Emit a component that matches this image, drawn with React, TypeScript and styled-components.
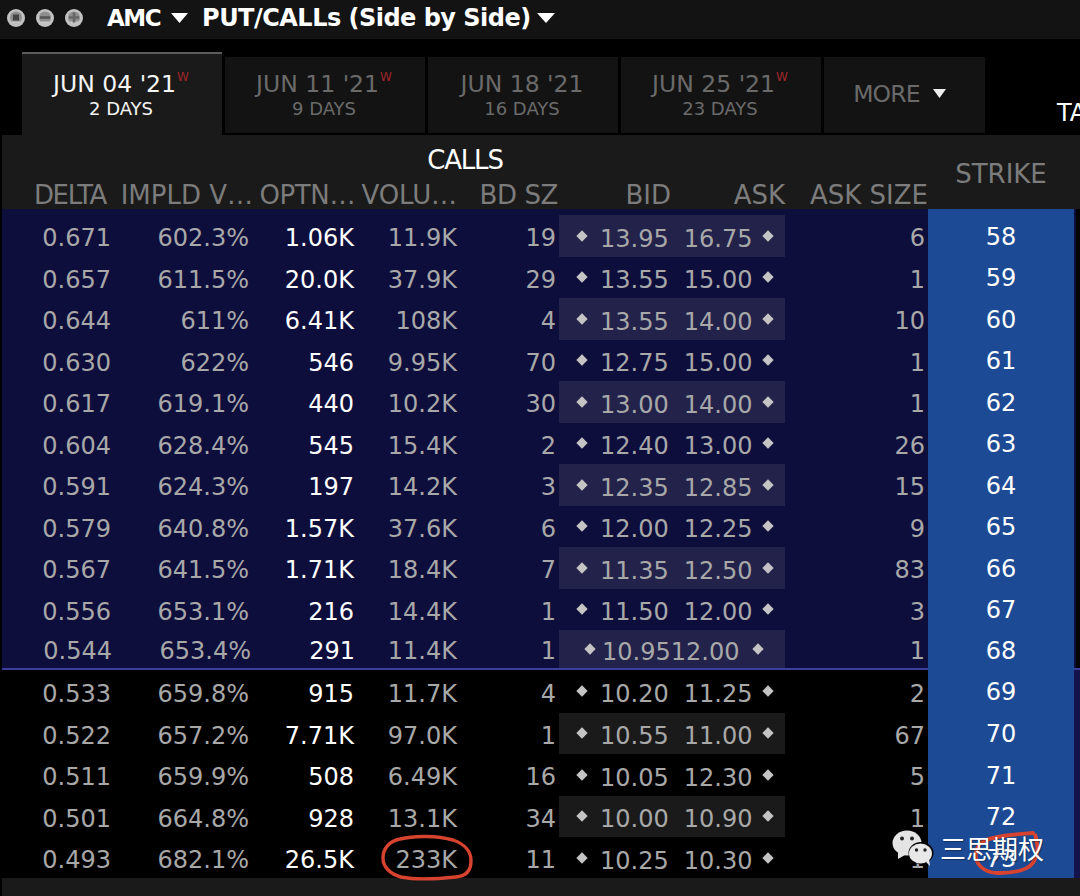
import React from "react";
import styled, { createGlobalStyle } from "styled-components";

const Global = createGlobalStyle`
  html, body { margin: 0; padding: 0; background: #000; }
  body { font-family: "DejaVu Sans", Verdana, sans-serif; }
`;

const Page = styled.div`
  position: relative;
  width: 1080px;
  height: 896px;
  overflow: hidden;
  background: #000;
`;

const TopBar = styled.header`
  height: 39px;
  background: #131313;
  display: flex;
  align-items: center;
  padding: 0 0 3px 7px;
  box-sizing: border-box;
`;

const WindowDots = styled.div`
  display: flex;
  gap: 11px;
  margin-right: 24px;
`;

const DotIcon = styled.svg`
  display: block;
  filter: blur(0.6px);
`;

const Title = styled.span<{ $wide?: boolean }>`
  color: #fff;
  font-weight: 700;
  font-size: ${(p) => (p.$wide ? 24 : 23)}px;
  letter-spacing: ${(p) => (p.$wide ? "-0.52px" : "-1.5px")};
  white-space: nowrap;
`;

const Caret = styled.svg<{ $left: number; $right?: number }>`
  margin-left: ${(p) => p.$left}px;
  margin-right: ${(p) => p.$right ?? 0}px;
  flex: none;
`;

const TabStrip = styled.nav`
  height: 96px;
  display: flex;
  align-items: flex-end;
  gap: 3px;
  padding-left: 22px;
  overflow: hidden;
  box-sizing: border-box;
`;

const Tab = styled.div<{ $w: number; $active?: boolean }>`
  flex: none;
  width: ${(p) => p.$w}px;
  height: ${(p) => (p.$active ? 83 : 76)}px;
  margin-bottom: ${(p) => (p.$active ? 0 : 2)}px;
  padding-right: 2px;
  background: ${(p) => (p.$active ? "#1a1a1a" : "#131313")};
  border-top: ${(p) => (p.$active ? "2px solid #5c5c5c" : "none")};
  color: ${(p) => (p.$active ? "#f4f4f4" : "#6a6a6a")};
  display: flex;
  flex-direction: column;
  align-items: center;
  justify-content: center;
  box-sizing: border-box;
`;

const TabDate = styled.div`
  font-size: 23.5px;
  line-height: 28px;
  white-space: nowrap;
`;

const Weekly = styled.sup`
  color: #a0262c;
  font-size: 12px;
  line-height: 0;
  vertical-align: 11px;
  margin-left: 1px;
`;

const TabDays = styled.div`
  font-size: 18px;
  line-height: 22px;
  white-space: nowrap;
`;

const MoreLabel = styled.div`
  display: flex;
  align-items: center;
  gap: 13px;
  font-size: 23.5px;
  letter-spacing: -0.8px;
  color: #6a6a6a;
  padding: 0 8px 3px 0;
`;

const EdgeLabel = styled.div`
  flex: none;
  margin-left: 69px;
  margin-bottom: 8px;
  color: #fff;
  font-size: 24px;
  line-height: 28px;
  white-space: nowrap;
`;

const Panel = styled.section`
  background: #1a1a1a;
  margin-left: 2px;
  height: 761px;
`;

const HeadArea = styled.div`
  height: 74px;
  display: flex;
`;

const HeadLeft = styled.div`
  width: 926px;
  display: flex;
  flex-direction: column;
`;

const CallsTitle = styled.div`
  color: #fff;
  font-size: 26px;
  letter-spacing: -1.2px;
  line-height: 28px;
  padding-top: 11px;
  text-align: center;
  height: 28px;
`;

const HeadCols = styled.div`
  display: grid;
  grid-template-columns: 104px 147px 102px 102px 101px 113px 114px 143px;
  margin-top: 7px;
`;

const HeadCell = styled.div<{ $track: number }>`
  text-align: right;
  color: #7c7c7c;
  font-size: 26px;
  letter-spacing: ${(p) => p.$track}px;
  line-height: 28px;
  white-space: nowrap;
`;

const StrikeHead = styled.div`
  width: 146px;
  text-align: center;
  color: #7c7c7c;
  font-size: 26px;
  line-height: 28px;
  padding-top: 25px;
`;

const Rows = styled.div`
  display: flex;
  flex-direction: column;
`;

const Row = styled.div<{ $h: number; $itm: boolean; $tight: boolean; $topPad: number; $nudge: number }>`
  display: grid;
  grid-template-columns: ${(p) =>
    p.$tight
      ? "110px 139px 104px 102px 99px 3px 226px 140px 3px 146px 6px"
      : "109px 138px 105px 103px 99px 3px 226px 140px 3px 146px 6px"};
  grid-template-rows: minmax(0, 1fr);
  height: ${(p) => p.$h}px;
  background: ${(p) => (p.$itm ? "#0e0e3c" : "#000")};
  border-bottom: ${(p) => (p.$tight ? "2px solid #3d3da0" : "none")};
  box-sizing: border-box;
  padding-top: ${(p) => p.$topPad}px;
  font-size: 24px;
  line-height: ${(p) => (p.$tight ? 37 : 41) + p.$nudge}px;
  color: #a8a8a8;
`;

const Cell = styled.div<{ $white?: boolean }>`
  text-align: right;
  color: ${(p) => (p.$white ? "#fff" : "#a8a8a8")};
  white-space: nowrap;
  padding-top: 3px;
`;

const Spacer = styled.div``;

const Quote = styled.div<{ $shade: string; $tight: boolean }>`
  background: ${(p) => p.$shade};
  display: flex;
  align-items: center;
  padding-left: ${(p) => (p.$tight ? 27 : 19)}px;
`;

const Diamond = styled.i<{ $gap?: number }>`
  flex: none;
  width: 8px;
  height: 8px;
  margin-left: ${(p) => p.$gap ?? 0}px;
  background: #c4c4c4;
  transform: rotate(45deg);
`;

const Price = styled.span<{ $gap: number }>`
  margin-left: ${(p) => p.$gap}px;
  padding-top: 7px;
  color: #a8a8a8;
`;

const StrikeCell = styled.div<{ $lift: number; $tight: boolean }>`
  background: #1c4a94;
  color: #fff;
  text-align: center;
  margin-top: ${(p) => -p.$lift}px;
  margin-bottom: ${(p) => (p.$tight ? -2 : 0)}px;
  padding-top: ${(p) => p.$lift + (p.$tight ? 3 : 1.5)}px;
`;

const EdgeCell = styled.div<{ $itm: boolean; $lift: number }>`
  margin-top: ${(p) => -p.$lift}px;
  background: ${(p) =>
    p.$itm ? "linear-gradient(90deg, #0e0e3c 2px, #000 2px)" : "#14144a"};
`;

const BottomBar = styled.div`
  height: 19px;
`;

const Overlay = styled.svg<{ $x: number; $y: number }>`
  position: absolute;
  left: ${(p) => p.$x}px;
  top: ${(p) => p.$y}px;
  pointer-events: none;
`;

const Watermark = styled.div`
  position: absolute;
  left: 940px;
  top: 830px;
  color: #fff;
  font-family: "Noto Sans CJK SC", "DejaVu Sans", sans-serif;
  font-size: 26px;
  line-height: 36px;
  white-space: nowrap;
  text-shadow: 1px 1px 1px rgba(0, 0, 0, 0.35);
`;

type R = [string, string, string, string, string, string, string, string, string];

const data: R[] = [
  ["0.671", "602.3%", "1.06K", "11.9K", "19", "13.95", "16.75", "6", "58"],
  ["0.657", "611.5%", "20.0K", "37.9K", "29", "13.55", "15.00", "1", "59"],
  ["0.644", "611%", "6.41K", "108K", "4", "13.55", "14.00", "10", "60"],
  ["0.630", "622%", "546", "9.95K", "70", "12.75", "15.00", "1", "61"],
  ["0.617", "619.1%", "440", "10.2K", "30", "13.00", "14.00", "1", "62"],
  ["0.604", "628.4%", "545", "15.4K", "2", "12.40", "13.00", "26", "63"],
  ["0.591", "624.3%", "197", "14.2K", "3", "12.35", "12.85", "15", "64"],
  ["0.579", "640.8%", "1.57K", "37.6K", "6", "12.00", "12.25", "9", "65"],
  ["0.567", "641.5%", "1.71K", "18.4K", "7", "11.35", "12.50", "83", "66"],
  ["0.556", "653.1%", "216", "14.4K", "1", "11.50", "12.00", "3", "67"],
  ["0.544", "653.4%", "291", "11.4K", "1", "10.95", "12.00", "1", "68"],
  ["0.533", "659.8%", "915", "11.7K", "4", "10.20", "11.25", "2", "69"],
  ["0.522", "657.2%", "7.71K", "97.0K", "1", "10.55", "11.00", "67", "70"],
  ["0.511", "659.9%", "508", "6.49K", "16", "10.05", "12.30", "5", "71"],
  ["0.501", "664.8%", "928", "13.1K", "34", "10.00", "10.90", "1", "72"],
  ["0.493", "682.1%", "26.5K", "233K", "11", "10.25", "10.30", "1", "73"],
];

const tabs = [
  { w: 200, date: "JUN 04 '21", days: "2 DAYS", active: true, weekly: true },
  { w: 200, date: "JUN 11 '21", days: "9 DAYS", weekly: true },
  { w: 190, date: "JUN 18 '21", days: "16 DAYS" },
  { w: 200, date: "JUN 25 '21", days: "23 DAYS", weekly: true },
];

const heads: [string, number][] = [
  ["DELTA", -1.4],
  ["IMPLD V…", 0],
  ["OPTN…", -0.4],
  ["VOLU…", -0.1],
  ["BD SZ", -0.4],
  ["BID", 0],
  ["ASK", 0],
  ["ASK SIZE", 0],
];

const heights = [47.5, 41.5, 41.5, 41.5, 41.5, 41.5, 41.5, 41.5, 41.5, 41.5, 39.5, 43, 41.5, 41.5, 41.5, 41];

const CaretIcon = ({ left, right, w = 17 }: { left: number; right?: number; w?: number }) => (
  <Caret $left={left} $right={right} width={w} height="10" viewBox="0 0 17 10" preserveAspectRatio="none">
    <path d="M0 0h17L8.5 10z" fill="#fff" />
  </Caret>
);

const Dot = ({ kind }: { kind: "x" | "m" | "p" }) => (
  <DotIcon width="18" height="18" viewBox="0 0 18 18">
    <circle cx="9" cy="9" r="9" fill="#c2c2c2" />
    <circle cx="9" cy="8.5" r="6" fill="#8e8e8e" />
    <path d="M4 12.5a6 5 0 0 0 10 0z" fill="#c8c8c8" />
    {kind === "x" && <rect x="6" y="5.5" width="6" height="6" fill="#444" />}
    {kind === "m" && <path d="M4 8.5h10" stroke="#555" strokeWidth="2.6" />}
    {kind === "p" && <path d="M4 8.5h10M9 3.5v10" stroke="#666" strokeWidth="2.6" />}
  </DotIcon>
);

export default function App() {
  return (
    <Page>
      <Global />
      <TopBar>
        <WindowDots>
          <Dot kind="x" />
          <Dot kind="m" />
          <Dot kind="p" />
        </WindowDots>
        <Title>AMC</Title>
        <CaretIcon left={11} right={14} />
        <Title $wide>PUT/CALLs (Side by Side)</Title>
        <CaretIcon left={6} w={18} />
      </TopBar>
      <TabStrip>
        {tabs.map((t) => (
          <Tab key={t.date} $w={t.w} $active={t.active}>
            <TabDate>
              {t.date}
              {t.weekly && <Weekly>W</Weekly>}
            </TabDate>
            <TabDays>{t.days}</TabDays>
          </Tab>
        ))}
        <Tab $w={161}>
          <MoreLabel>
            MORE
            <Caret $left={0} width="13" height="9" viewBox="0 0 17 10" preserveAspectRatio="none">
              <path d="M0 0h17L8.5 10z" fill="#eee" />
            </Caret>
          </MoreLabel>
        </Tab>
        <EdgeLabel>TA</EdgeLabel>
      </TabStrip>
      <Panel>
        <HeadArea>
          <HeadLeft>
            <CallsTitle>CALLS</CallsTitle>
            <HeadCols>
              {heads.map(([h, track]) => (
                <HeadCell key={h} $track={track}>
                  {h}
                </HeadCell>
              ))}
            </HeadCols>
          </HeadLeft>
          <StrikeHead>STRIKE</StrikeHead>
        </HeadArea>
        <Rows>
          {data.map((r, i) => {
            const itm = i < 11;
            const tight = i === 10;
            const shaded = i % 2 === 0;
            const shade = shaded ? (itm ? "#22224a" : "#1a1a1a") : "transparent";
            const lift = i === 0 ? 6 : 0;
            return (
              <Row key={r[8]} $h={heights[i]} $itm={itm} $tight={tight} $topPad={lift} $nudge={i === 11 ? 2 : 0}>
                <Cell>{r[0]}</Cell>
                <Cell>{r[1]}</Cell>
                <Cell $white>{r[2]}</Cell>
                <Cell>{r[3]}</Cell>
                <Cell>{r[4]}</Cell>
                <Spacer />
                <Quote $shade={shade} $tight={tight}>
                  <Diamond />
                  <Price $gap={tight ? 8 : 14}>{r[5]}</Price>
                  <Price $gap={tight ? 0 : 15}>{r[6]}</Price>
                  <Diamond $gap={tight ? 15 : 12} />
                </Quote>
                <Cell>{r[7]}</Cell>
                <Spacer />
                <StrikeCell $lift={lift} $tight={tight}>
                  {r[8]}
                </StrikeCell>
                <EdgeCell $itm={itm} $lift={lift} />
              </Row>
            );
          })}
        </Rows>
        <BottomBar />
      </Panel>

      <Overlay $x={378} $y={832} width="100" height="50" viewBox="0 0 100 50">
        <path
          d="M22 7C11 9 5 17 5 26c0 9 7 16 18 19 15 3 36 2 55 0 11-1 15-7 15-16 0-9-6-17-18-21C60 4 38 3 22 7z"
          fill="none"
          stroke="#d8432f"
          strokeWidth="3.4"
        />
      </Overlay>
      <Overlay $x={972} $y={826} width="72" height="52" viewBox="0 0 72 52">
        <path
          d="M61 7c-12 1-36 2-49 8-7 3-9 12-8 17 2 10 12 15 22 15 12 0 27-1 34-9 6-7 7-19 3-30l2 10"
          fill="none"
          stroke="#d8432f"
          strokeWidth="3.8"
          strokeLinecap="round"
        />
      </Overlay>
      <Overlay $x={892} $y={829} width="42" height="40" viewBox="0 0 42 40">
        <ellipse cx="15" cy="14" rx="14.5" ry="12.5" fill="#e4e4e4" />
        <path d="M6 23l0 7 7-4z" fill="#e4e4e4" />
        <ellipse cx="29" cy="24" rx="12.5" ry="11" fill="#000" />
        <ellipse cx="28.5" cy="24.5" rx="11.5" ry="10" fill="#e8e8e8" />
        <path d="M34 33l4 4-1-7z" fill="#e8e8e8" />
        <circle cx="10" cy="9.5" r="2" fill="#222" />
        <circle cx="20" cy="9.5" r="2" fill="#222" />
        <circle cx="24.5" cy="21" r="1.7" fill="#222" />
        <circle cx="33" cy="21" r="1.7" fill="#222" />
      </Overlay>
      <Watermark>三思期权</Watermark>
    </Page>
  );
}
